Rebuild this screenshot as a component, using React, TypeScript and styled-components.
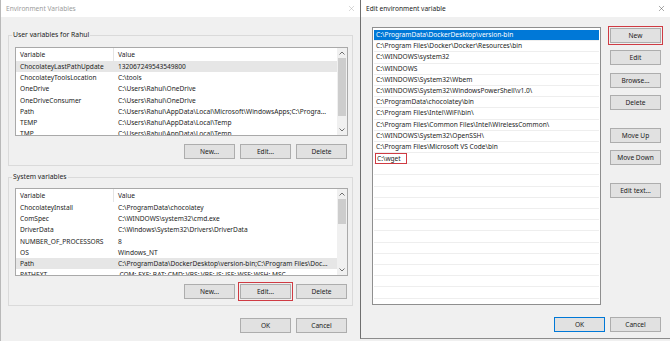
import styled, { createGlobalStyle } from "styled-components";
import { X } from "lucide-react";

const GlobalStyle = createGlobalStyle`
  html, body { margin: 0; padding: 0; }
  body {
    font-family: "Noto Sans", "Open Sans", sans-serif;
    background: #f0f0f0;
    overflow: hidden;
  }
`;

const Screen = styled.div`
  display: flex;
  align-items: flex-start;
  width: 670px;
  height: 341px;
  background: #f0f0f0;
  font-size: 6.6px;
  color: #1b1b1b;
`;

const Window = styled.div<{ $front?: boolean }>`
  display: flex;
  flex-direction: column;
  box-sizing: border-box;
  background: #f0f0f0;
  ${(p) =>
    p.$front
      ? `flex: 1; height: 339px; border-left: 1px solid #6f6f6f; border-bottom: 1px solid #8c8c8c;`
      : `width: 361px; height: 341px; border-left: 1px solid #b9b9b9;`}
`;

const TitleBar = styled.div<{ $active?: boolean }>`
  display: flex;
  align-items: center;
  justify-content: space-between;
  height: 17px;
  flex-shrink: 0;
  padding: 0 4px 0 5px;
  background: #fff;
  color: ${(p) => (p.$active ? "#1a1a1a" : "#9c9c9c")};
  font-size: 6.6px;
`;

const Close = styled(X)<{ $active?: boolean }>`
  color: ${(p) => (p.$active ? "#444" : "#aaa")};
`;

/* ---------- left window ---------- */

const Group = styled.fieldset<{ $top: number; $pt: number }>`
  margin: ${(p) => p.$top}px 7px 0 7px;
  padding: ${(p) => p.$pt}px 4px 6px 6px;
  border: 1px solid #dadada;
  min-width: 0;
`;

const Legend = styled.legend`
  margin-left: -3px;
  padding: 0 1px;
  line-height: 10px;
  font-size: 6.8px;
  color: #1b1b1b;
`;

const VarList = styled.div<{ $h: number }>`
  display: flex;
  height: ${(p) => p.$h}px;
  box-sizing: border-box;
  border: 1px solid #a9a9a9;
  background: #fff;
  overflow: hidden;
`;

const VarTable = styled.div`
  flex: 1;
  min-width: 0;
  overflow: hidden;
`;

const VarRow = styled.div<{ $head?: boolean; $sel?: boolean }>`
  display: grid;
  grid-template-columns: 98px 1fr;
  align-items: center;
  height: ${(p) => (p.$head ? "13px" : "11.2px")};
  background: ${(p) => (p.$sel ? "#e6e6e6" : "#fff")};
`;

const Cell = styled.div<{ $divider?: boolean }>`
  padding-left: 4px;
  white-space: nowrap;
  overflow: hidden;
  line-height: ${(p) => (p.$divider ? "13px" : "11.2px")};
  border-right: ${(p) => (p.$divider ? "1px solid #e5e5e5" : "none")};
`;

const Scrollbar = styled.div`
  display: flex;
  flex-direction: column;
  width: 10px;
  flex-shrink: 0;
  background: #f0f0f0;
`;

const Arrow = styled.div`
  display: flex;
  align-items: center;
  justify-content: center;
  height: 10px;
  flex-shrink: 0;
`;

const Track = styled.div`
  flex: 1;
`;

const Thumb = styled.div<{ $h: number }>`
  height: ${(p) => p.$h}px;
  margin: 0 1px;
  background: #cdcdcd;
`;

const ButtonRow = styled.div<{ $mt: number; $pr: number }>`
  display: flex;
  justify-content: flex-end;
  gap: 5px;
  margin-top: ${(p) => p.$mt}px;
  padding-right: ${(p) => p.$pr}px;
`;

const Button = styled.button<{ $hl?: boolean; $def?: boolean }>`
  width: 51px;
  height: 15px;
  padding: 0;
  box-sizing: border-box;
  font-family: inherit;
  font-size: 6.6px;
  color: #1b1b1b;
  background: #e1e1e1;
  border: 1px solid ${(p) => (p.$def ? "#0078d7" : "#adadad")};
  outline: ${(p) => (p.$hl ? "1.6px solid #cf3b43" : "none")};
  outline-offset: 1.5px;
`;

/* ---------- right window ---------- */

const EditBody = styled.div`
  display: flex;
  gap: 9px;
  padding: 10px 9px 0 11px;
`;

const PathList = styled.div`
  width: 229px;
  height: 278px;
  box-sizing: border-box;
  padding: 2px 1px;
  border: 1px solid #8f8f8f;
  background: #fff;
  overflow: hidden;
`;

const PathRow = styled.div<{ $sel?: boolean }>`
  height: 11.2px;
  box-sizing: border-box;
  padding-left: 2px;
  line-height: 10.2px;
  white-space: nowrap;
  border-bottom: 1px solid #eeeeee;
  background: ${(p) => (p.$sel ? "#0078d7" : "#fff")};
  color: ${(p) => (p.$sel ? "#fff" : "#1b1b1b")};
`;

const Marked = styled.span`
  display: inline-block;
  padding: 0 5px 0 1px;
  margin-left: -1px;
  line-height: 9px;
  border: 1.5px solid #cf3b43;
`;

const SideButtons = styled.div`
  display: flex;
  flex-direction: column;
  padding-top: 1px;
`;

const Spaced = styled.div<{ $mt: number }>`
  margin-top: ${(p) => p.$mt}px;
  display: flex;
`;

const Chevron = ({ up }: { up?: boolean }) => (
  <svg width="6" height="4" viewBox="0 0 6 4">
    <path d={up ? "M0.5 3.5 L3 1 L5.5 3.5" : "M0.5 0.5 L3 3 L5.5 0.5"} fill="none" stroke="#606060" strokeWidth="0.9" />
  </svg>
);

const userVars: [string, string][] = [
  ["ChocolateyLastPathUpdate", "132067249543549800"],
  ["ChocolateyToolsLocation", "C:\\tools"],
  ["OneDrive", "C:\\Users\\Rahul\\OneDrive"],
  ["OneDriveConsumer", "C:\\Users\\Rahul\\OneDrive"],
  ["Path", "C:\\Users\\Rahul\\AppData\\Local\\Microsoft\\WindowsApps;C:\\Progra..."],
  ["TEMP", "C:\\Users\\Rahul\\AppData\\Local\\Temp"],
  ["TMP", "C:\\Users\\Rahul\\AppData\\Local\\Temp"],
];

const sysVars: [string, string][] = [
  ["ChocolateyInstall", "C:\\ProgramData\\chocolatey"],
  ["ComSpec", "C:\\WINDOWS\\system32\\cmd.exe"],
  ["DriverData", "C:\\Windows\\System32\\Drivers\\DriverData"],
  ["NUMBER_OF_PROCESSORS", "8"],
  ["OS", "Windows_NT"],
  ["Path", "C:\\ProgramData\\DockerDesktop\\version-bin;C:\\Program Files\\Doc..."],
  ["PATHEXT", ".COM;.EXE;.BAT;.CMD;.VBS;.VBE;.JS;.JSE;.WSF;.WSH;.MSC"],
];

const paths = [
  "C:\\ProgramData\\DockerDesktop\\version-bin",
  "C:\\Program Files\\Docker\\Docker\\Resources\\bin",
  "C:\\WINDOWS\\system32",
  "C:\\WINDOWS",
  "C:\\WINDOWS\\System32\\Wbem",
  "C:\\WINDOWS\\System32\\WindowsPowerShell\\v1.0\\",
  "C:\\ProgramData\\chocolatey\\bin",
  "C:\\Program Files\\Intel\\WiFi\\bin\\",
  "C:\\Program Files\\Common Files\\Intel\\WirelessCommon\\",
  "C:\\WINDOWS\\System32\\OpenSSH\\",
  "C:\\Program Files\\Microsoft VS Code\\bin",
];

function VariableList({ rows, sel, height, thumb }: { rows: [string, string][]; sel: number; height: number; thumb: number }) {
  return (
    <VarList $h={height}>
      <VarTable>
        <VarRow $head>
          <Cell $divider>Variable</Cell>
          <Cell>Value</Cell>
        </VarRow>
        {rows.map(([k, v], i) => (
          <VarRow key={k + i} $sel={i === sel}>
            <Cell>{k}</Cell>
            <Cell>{v}</Cell>
          </VarRow>
        ))}
      </VarTable>
      <Scrollbar>
        <Arrow><Chevron up /></Arrow>
        <Track><Thumb $h={thumb} /></Track>
        <Arrow><Chevron /></Arrow>
      </Scrollbar>
    </VarList>
  );
}

export default function App() {
  const empty = Array.from({ length: 14 });
  return (
    <Screen>
      <GlobalStyle />
      <Window>
        <TitleBar>
          <span>Environment Variables</span>
          <Close size={9} strokeWidth={1.2} />
        </TitleBar>
        <Group $top={13} $pt={7}>
          <Legend>User variables for Rahul</Legend>
          <VariableList rows={userVars} sel={0} height={89} thumb={58} />
          <ButtonRow $mt={8} $pr={1}>
            <Button>New...</Button>
            <Button>Edit...</Button>
            <Button>Delete</Button>
          </ButtonRow>
        </Group>
        <Group $top={6} $pt={6}>
          <Legend>System variables</Legend>
          <VariableList rows={sysVars} sel={5} height={88} thumb={25} />
          <ButtonRow $mt={8} $pr={1}>
            <Button>New...</Button>
            <Button $hl>Edit...</Button>
            <Button>Delete</Button>
          </ButtonRow>
        </Group>
        <ButtonRow $mt={12} $pr={13}>
          <Button>OK</Button>
          <Button>Cancel</Button>
        </ButtonRow>
      </Window>

      <Window $front>
        <TitleBar $active>
          <span>Edit environment variable</span>
          <Close $active size={9} strokeWidth={1.2} />
        </TitleBar>
        <EditBody>
          <PathList>
            {paths.map((p, i) => (
              <PathRow key={p} $sel={i === 0}>{p}</PathRow>
            ))}
            <PathRow>
              <Marked>C:\wget</Marked>
            </PathRow>
            {empty.map((_, i) => (
              <PathRow key={"e" + i} />
            ))}
          </PathList>
          <SideButtons>
            <Spaced $mt={0}><Button $hl>New</Button></Spaced>
            <Spaced $mt={7}><Button>Edit</Button></Spaced>
            <Spaced $mt={8}><Button>Browse...</Button></Spaced>
            <Spaced $mt={7}><Button>Delete</Button></Spaced>
            <Spaced $mt={18}><Button>Move Up</Button></Spaced>
            <Spaced $mt={7}><Button>Move Down</Button></Spaced>
            <Spaced $mt={18}><Button>Edit text...</Button></Spaced>
          </SideButtons>
        </EditBody>
        <ButtonRow $mt={12} $pr={9}>
          <Button $def>OK</Button>
          <Button>Cancel</Button>
        </ButtonRow>
      </Window>
    </Screen>
  );
}
